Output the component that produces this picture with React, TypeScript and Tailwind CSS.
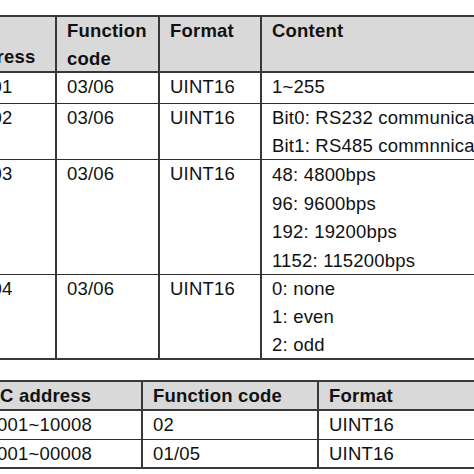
const registers = [
  { addr: "40001", code: "03/06", format: "UINT16", content: ["1~255"], h: "h-[30px]" },
  {
    addr: "40002",
    code: "03/06",
    format: "UINT16",
    content: ["Bit0: RS232 communication", "Bit1: RS485 commnnication"],
    h: "h-[56px]",
  },
  {
    addr: "40003",
    code: "03/06",
    format: "UINT16",
    content: ["48: 4800bps", "96: 9600bps", "192: 19200bps", "1152: 115200bps"],
    h: "h-[115px]",
  },
  { addr: "40004", code: "03/06", format: "UINT16", content: ["0: none", "1: even", "2: odd"], h: "h-[84px]" },
];

const coils = [
  { addr: "10001~10008", code: "02", format: "UINT16" },
  { addr: "00001~00008", code: "01/05", format: "UINT16" },
];

const cell = "pl-[10px] border-r-2 border-[#383838] overflow-hidden whitespace-nowrap";

export default function App() {
  return (
    <div
      className="w-[474px] h-[474px] overflow-hidden bg-white text-[18.5px] tracking-[0.2px] text-[#111]"
      style={{ fontFamily: '"Liberation Sans", Arial, sans-serif' }}
    >
      {/* register table */}
      <div className="pt-[15px] -ml-[50px] w-[640px]">
        <div className="border-t-2 border-b-2 border-[#383838]">
          <div className="grid grid-cols-[107px_103px_102px_320px] h-[54px] bg-[#d9d9d9] font-bold leading-[28px]">
            <div className={cell + " flex items-end"}>Address</div>
            <div className={cell}>
              Function
              <br />
              code
            </div>
            <div className={cell}>Format</div>
            <div className={cell}>Content</div>
          </div>
          <div className="border-t-2 border-[#383838]" />
          {registers.map((r, i) => (
            <div
              key={r.addr}
              className={
                "grid grid-cols-[107px_103px_102px_320px] leading-[28px] " +
                r.h +
                (i > 0 ? " border-t border-[#2e2e2e]" : "")
              }
            >
              <div className={cell}>{r.addr}</div>
              <div className={cell}>{r.code}</div>
              <div className={cell}>{r.format}</div>
              <div className={cell + (r.content.length === 4 ? " leading-[28.7px] pt-[1px]" : "")}>
                {r.content.map((c) => (
                  <div key={c}>{c}</div>
                ))}
              </div>
            </div>
          ))}
        </div>
      </div>

      {/* coil table */}
      <div className="mt-[20px] -ml-[34px] w-[660px]">
        <div className="border-t-2 border-b-2 border-[#383838]">
          <div className="grid grid-cols-[177px_176px_300px] h-[27px] bg-[#d9d9d9] font-bold leading-[28px]">
            <div className={cell}>PLC address</div>
            <div className={cell}>Function code</div>
            <div className={cell}>Format</div>
          </div>
          <div className="border-t-2 border-[#383838]" />
          {coils.map((c, i) => (
            <div
              key={c.addr}
              className={
                "grid grid-cols-[177px_176px_300px] h-[28px] leading-[28px]" +
                (i > 0 ? " border-t border-[#2e2e2e]" : "")
              }
            >
              <div className={cell}>{c.addr}</div>
              <div className={cell}>{c.code}</div>
              <div className={cell}>{c.format}</div>
            </div>
          ))}
        </div>
      </div>
    </div>
  );
}
